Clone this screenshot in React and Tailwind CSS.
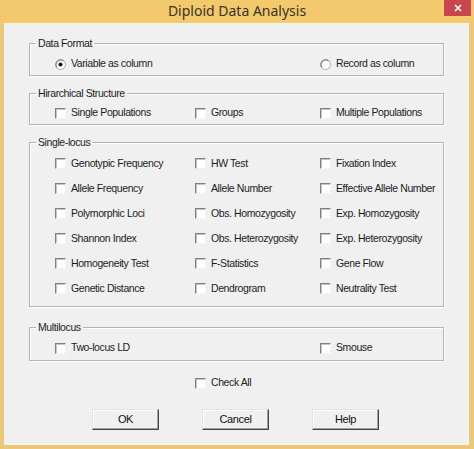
import React from 'react';

const ui = { fontFamily: '"Liberation Sans", Arial, sans-serif' };

const Box = ({ checked }) => (
    <span className="w-[11px] h-[11px] shrink-0 bg-white border border-t-[#808080] border-l-[#808080] border-b-[#f4f4f4] border-r-[#f4f4f4] shadow-[inset_1px_1px_0_#c4c4c4]">
        {checked && '✓'}
    </span>
);

const Radio = ({ on }) => (
    <svg width="11" height="11" viewBox="0 0 11 11" className="shrink-0">
        <circle cx="5.5" cy="5.5" r="5" fill="#fff" stroke="#a8a8a8" />
        <path d="M1.6 8.4 A5 5 0 0 1 8.4 1.6" fill="none" stroke="#707070" />
        {on && <circle cx="5.5" cy="5.5" r="2" fill="#111" />}
    </svg>
);

const Check = ({ label }) => (
    <div className="flex items-center gap-[5px] h-full">
        <Box />
        <span>{label}</span>
    </div>
);

// groupbox with its caption laid over the top edge
const Group = ({ title, className, children }) => (
    <div className={`relative w-[415px] border border-[#b4b4b4] shadow-[inset_1px_1px_0_#fff,1px_1px_0_#fff] ${className}`}>
        <span className="absolute -top-[8px] left-[6px] px-[2px] bg-[#f0f0f0] leading-[14px]">{title}</span>
        {children}
    </div>
);

const singleLocus = [
    ['Genotypic Frequency', 'HW Test', 'Fixation Index'],
    ['Allele Frequency', 'Allele Number', 'Effective Allele Number'],
    ['Polymorphic Loci', 'Obs. Homozygosity', 'Exp. Homozygosity'],
    ['Shannon Index', 'Obs. Heterozygosity', 'Exp. Heterozygosity'],
    ['Homogeneity Test', 'F-Statistics', 'Gene Flow'],
    ['Genetic Distance', 'Dendrogram', 'Neutrality Test'],
];

const Btn = ({ children }) => (
    <button className="w-[67px] h-[21px] bg-[#f0f0f0] border border-t-[#e2e2e2] border-l-[#e2e2e2] border-b-[#444] border-r-[#444] shadow-[inset_-1px_-1px_0_#a0a0a0,inset_1px_1px_0_#fff] text-[11px] text-[#111]">
        {children}
    </button>
);

const App = () => {
    return (
        <div className="w-[474px] h-[449px] bg-[#ebc77a] flex flex-col overflow-hidden">
            {/* Title bar */}
            <div className="h-[23px] shrink-0 grid grid-cols-[1fr_auto_1fr] items-start bg-[#f2c96d]">
                <div />
                <div className="text-[14px] leading-[22px] text-[#3b3226]" style={{ fontFamily: '"Noto Sans", "Open Sans", sans-serif' }}>
                    Diploid Data Analysis
                </div>
                <div className="flex justify-end pr-[3px]">
                    <div className="w-[27px] h-[16px] bg-[#c8474e] flex items-center justify-center">
                        <svg width="8" height="8" viewBox="0 0 8 8">
                            <path d="M1 1 L7 7 M7 1 L1 7" stroke="#fff" strokeWidth="1.6" />
                        </svg>
                    </div>
                </div>
            </div>

            {/* Client area */}
            <div className="flex-1 ml-[4px] mr-[5px] mb-[4px] bg-[#f0f0f0] border border-[#f9f3e6] pl-[24px] text-[10.5px] tracking-[-0.4px] text-[#1c1c1c]" style={ui}>
                <Group title="Data Format" className="mt-[19px] pt-[12px] pb-[3px] pl-[25px]">
                    <div className="flex h-[16px] items-center">
                        <div className="w-[265px] flex items-center gap-[5px]">
                            <Radio on />
                            <span>Variable as column</span>
                        </div>
                        <div className="flex items-center gap-[5px]">
                            <Radio />
                            <span>Record as column</span>
                        </div>
                    </div>
                </Group>

                <Group title="Hirarchical Structure" className="mt-[17px] pt-[11px] pb-[3px] pl-[25px]">
                    <div className="grid grid-cols-[140px_125px_1fr] h-[16px]">
                        <Check label="Single Populations" />
                        <Check label="Groups" />
                        <Check label="Multiple Populations" />
                    </div>
                </Group>

                <Group title="Single-locus" className="mt-[17px] pt-[8px] pb-[5px] pl-[25px]">
                    <div className="grid grid-cols-[140px_125px_1fr] auto-rows-[25px]">
                        {singleLocus.flat().map((label) => (
                            <Check key={label} label={label} />
                        ))}
                    </div>
                </Group>

                <Group title="Multilocus" className="mt-[20px] pt-[12px] pb-[4px] pl-[25px]">
                    <div className="flex h-[16px] items-center">
                        <div className="w-[265px] h-full">
                            <Check label="Two-locus LD" />
                        </div>
                        <Check label="Smouse" />
                    </div>
                </Group>

                <div className="w-[415px] mt-[14px] h-[16px] pl-[166px]">
                    <Check label="Check All" />
                </div>

                <div className="w-[415px] mt-[18px] pl-[63px] flex gap-[43px]">
                    <Btn>OK</Btn>
                    <Btn>Cancel</Btn>
                    <Btn>Help</Btn>
                </div>
            </div>
        </div>
    );
};

export default App;
